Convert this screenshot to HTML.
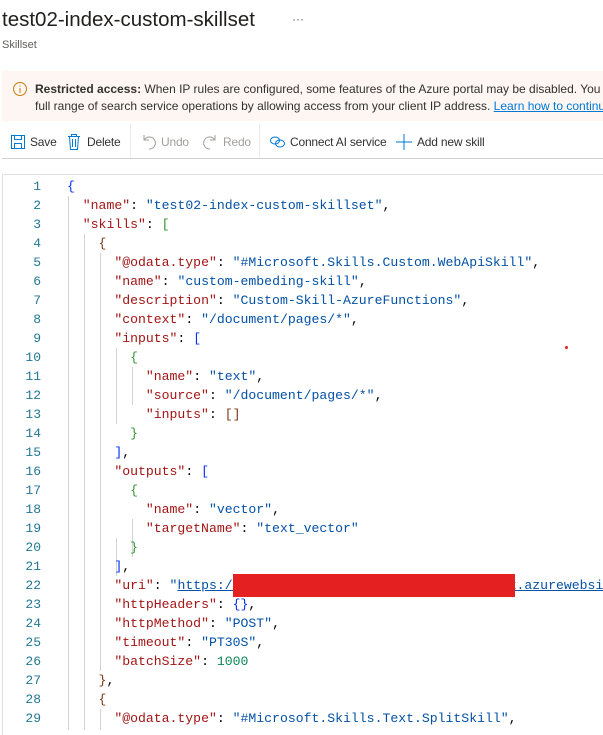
<!DOCTYPE html>
<html><head><meta charset="utf-8"><style>
body{margin:0;width:603px;height:730px;overflow:hidden;background:#fff;font-family:"Liberation Sans",sans-serif;color:#323130;position:relative}
.a{position:absolute;white-space:pre}
.code{font-family:"Liberation Mono",monospace;font-size:13.15px;line-height:19px}
.k{color:#a31515}.s{color:#0451a5}.n{color:#098658}.b1{color:#0431fa}.b2{color:#319331}.b3{color:#7b3814}
.ln{position:absolute;left:0;width:41px;text-align:right;color:#237893;font-family:"Liberation Mono",monospace;font-size:13px;line-height:19px;white-space:pre}
.g{position:absolute;width:1px;background:#d3d3d3}
.tb{position:absolute;top:135px;font-size:12px;letter-spacing:-0.2px;color:#323130}
.dis{color:#a19f9d}
</style></head><body>
<div class="a" style="left:2px;top:8px;font-size:20.5px;color:#201f1e">test02-index-custom-skillset</div>
<div class="a" style="left:292px;top:12px;font-size:12px;color:#605e5c">···</div>
<div class="a" style="left:2px;top:39px;font-size:11px;color:#605e5c">Skillset</div>
<div style="position:absolute;left:2px;top:71px;width:601px;height:50px;background:#fdf6f3"></div>
<svg class="a" style="left:12px;top:81px" width="16" height="16"><circle cx="8" cy="8" r="6.5" fill="none" stroke="#c87f0a" stroke-width="1"/><rect x="7.5" y="7" width="1" height="5" fill="#c87f0a"/><rect x="7.5" y="4.5" width="1" height="1.2" fill="#c87f0a"/></svg>
<div class="a" style="left:35px;top:81px;font-size:12px;line-height:17px;color:#323130"><b>Restricted access:</b> When IP rules are configured, some features of the Azure portal may be disabled. You can
full range of search service operations by allowing access from your client IP address. <span style="color:#0078d4;text-decoration:underline">Learn how to continue</span></div>
<div style="position:absolute;left:2px;top:158px;width:601px;height:1px;background:#d1d1d1"></div>
<div style="position:absolute;left:130px;top:124px;width:1px;height:34px;background:#edebe9"></div>
<div style="position:absolute;left:259px;top:124px;width:1px;height:34px;background:#edebe9"></div>
<svg class="a" style="left:10px;top:134px" width="16" height="16"><rect x="1.5" y="1.5" width="13" height="13" fill="none" stroke="#0078d4"/><rect x="4.5" y="1.5" width="7" height="4" fill="none" stroke="#0078d4"/><rect x="4.5" y="9.5" width="7" height="5" fill="none" stroke="#0078d4"/></svg>
<div class="tb" style="left:30px">Save</div>
<svg class="a" style="left:67px;top:133px" width="14" height="18"><path d="M1 3.5h12M4.5 3.5V1.5h5v2M2.5 3.5l1 13h7l1-13M5.5 6v8M8.5 6v8" fill="none" stroke="#0078d4"/></svg>
<div class="tb" style="left:87px">Delete</div>
<svg class="a" style="left:141px;top:133px" width="16" height="18"><path d="M3 2v5h5M3.5 6.5A6 6 0 1 1 8 16" fill="none" stroke="#a19f9d"/></svg>
<div class="tb dis" style="left:161px">Undo</div>
<svg class="a" style="left:202px;top:133px" width="16" height="18"><path d="M13 2v5H8M12.5 6.5A6 6 0 1 0 8 16" fill="none" stroke="#a19f9d"/></svg>
<div class="tb dis" style="left:223px">Redo</div>
<svg class="a" style="left:269px;top:135px" width="18" height="14"><ellipse cx="6" cy="5.5" rx="4.5" ry="3.5" fill="none" stroke="#0078d4"/><ellipse cx="11" cy="8.5" rx="4.5" ry="3.5" fill="none" stroke="#0078d4"/></svg>
<div class="tb" style="left:290px">Connect AI service</div>
<svg class="a" style="left:396px;top:134px" width="16" height="16"><path d="M8 0v16M0 8h16" stroke="#0078d4"/></svg>
<div class="tb" style="left:417px">Add new skill</div>
<div style="position:absolute;left:2px;top:174px;width:601px;height:560px;border:1px solid #e1dfdd;border-right:none;border-bottom:none"></div>
<div class="g" style="left:68px;top:196px;height:534px"></div>
<div class="g" style="left:84px;top:234px;height:496px"></div>
<div class="g" style="left:100px;top:253px;height:418px"></div>
<div class="g" style="left:100px;top:709px;height:21px"></div>
<div class="g" style="left:116px;top:348px;height:76px"></div>
<div class="g" style="left:116px;top:538px;height:38px"></div>
<div class="g" style="left:132px;top:367px;height:38px"></div>
<div class="g" style="left:132px;top:519px;height:38px"></div>
<div class="ln" style="top:177px">1
2
3
4
5
6
7
8
9
10
11
12
13
14
15
16
17
18
19
20
21
22
23
24
25
26
27
28
29</div>
<div class="a code" style="left:67px;top:177px;color:#000"><span class="b1">{</span>
  <span class="k">"name"</span>: <span class="s">"test02-index-custom-skillset"</span>,
  <span class="k">"skills"</span>: <span class="b2">[</span>
    <span class="b3">{</span>
      <span class="k">"@odata.type"</span>: <span class="s">"#Microsoft.Skills.Custom.WebApiSkill"</span>,
      <span class="k">"name"</span>: <span class="s">"custom-embeding-skill"</span>,
      <span class="k">"description"</span>: <span class="s">"Custom-Skill-AzureFunctions"</span>,
      <span class="k">"context"</span>: <span class="s">"/document/pages/*"</span>,
      <span class="k">"inputs"</span>: <span class="b1">[</span>
        <span class="b2">{</span>
          <span class="k">"name"</span>: <span class="s">"text"</span>,
          <span class="k">"source"</span>: <span class="s">"/document/pages/*"</span>,
          <span class="k">"inputs"</span>: <span class="b3">[]</span>
        <span class="b2">}</span>
      <span class="b1">]</span>,
      <span class="k">"outputs"</span>: <span class="b1">[</span>
        <span class="b2">{</span>
          <span class="k">"name"</span>: <span class="s">"vector"</span>,
          <span class="k">"targetName"</span>: <span class="s">"text_vector"</span>
        <span class="b2">}</span>
      <span class="b1">]</span>,
      <span class="k">"uri"</span>: <span class="s">"<u>https://xxxxxxxxxxxxxxxxxxxxxxxxxxxxxxxxxxx.azurewebsi</u></span></div>
<div class="a code" style="left:67px;top:595px;color:#000">      <span class="k">"httpHeaders"</span>: <span class="b1">{}</span>,
      <span class="k">"httpMethod"</span>: <span class="s">"POST"</span>,
      <span class="k">"timeout"</span>: <span class="s">"PT30S"</span>,
      <span class="k">"batchSize"</span>: <span class="n">1000</span>
    <span class="b3">}</span>,
    <span class="b3">{</span>
      <span class="k">"@odata.type"</span>: <span class="s">"#Microsoft.Skills.Text.SplitSkill"</span>,</div>
<div style="position:absolute;left:233px;top:574px;width:282px;height:23px;background:#e52020"></div>
<div style="position:absolute;left:565px;top:346px;width:3px;height:3px;border-radius:50%;background:#e52020"></div>
</body></html>
